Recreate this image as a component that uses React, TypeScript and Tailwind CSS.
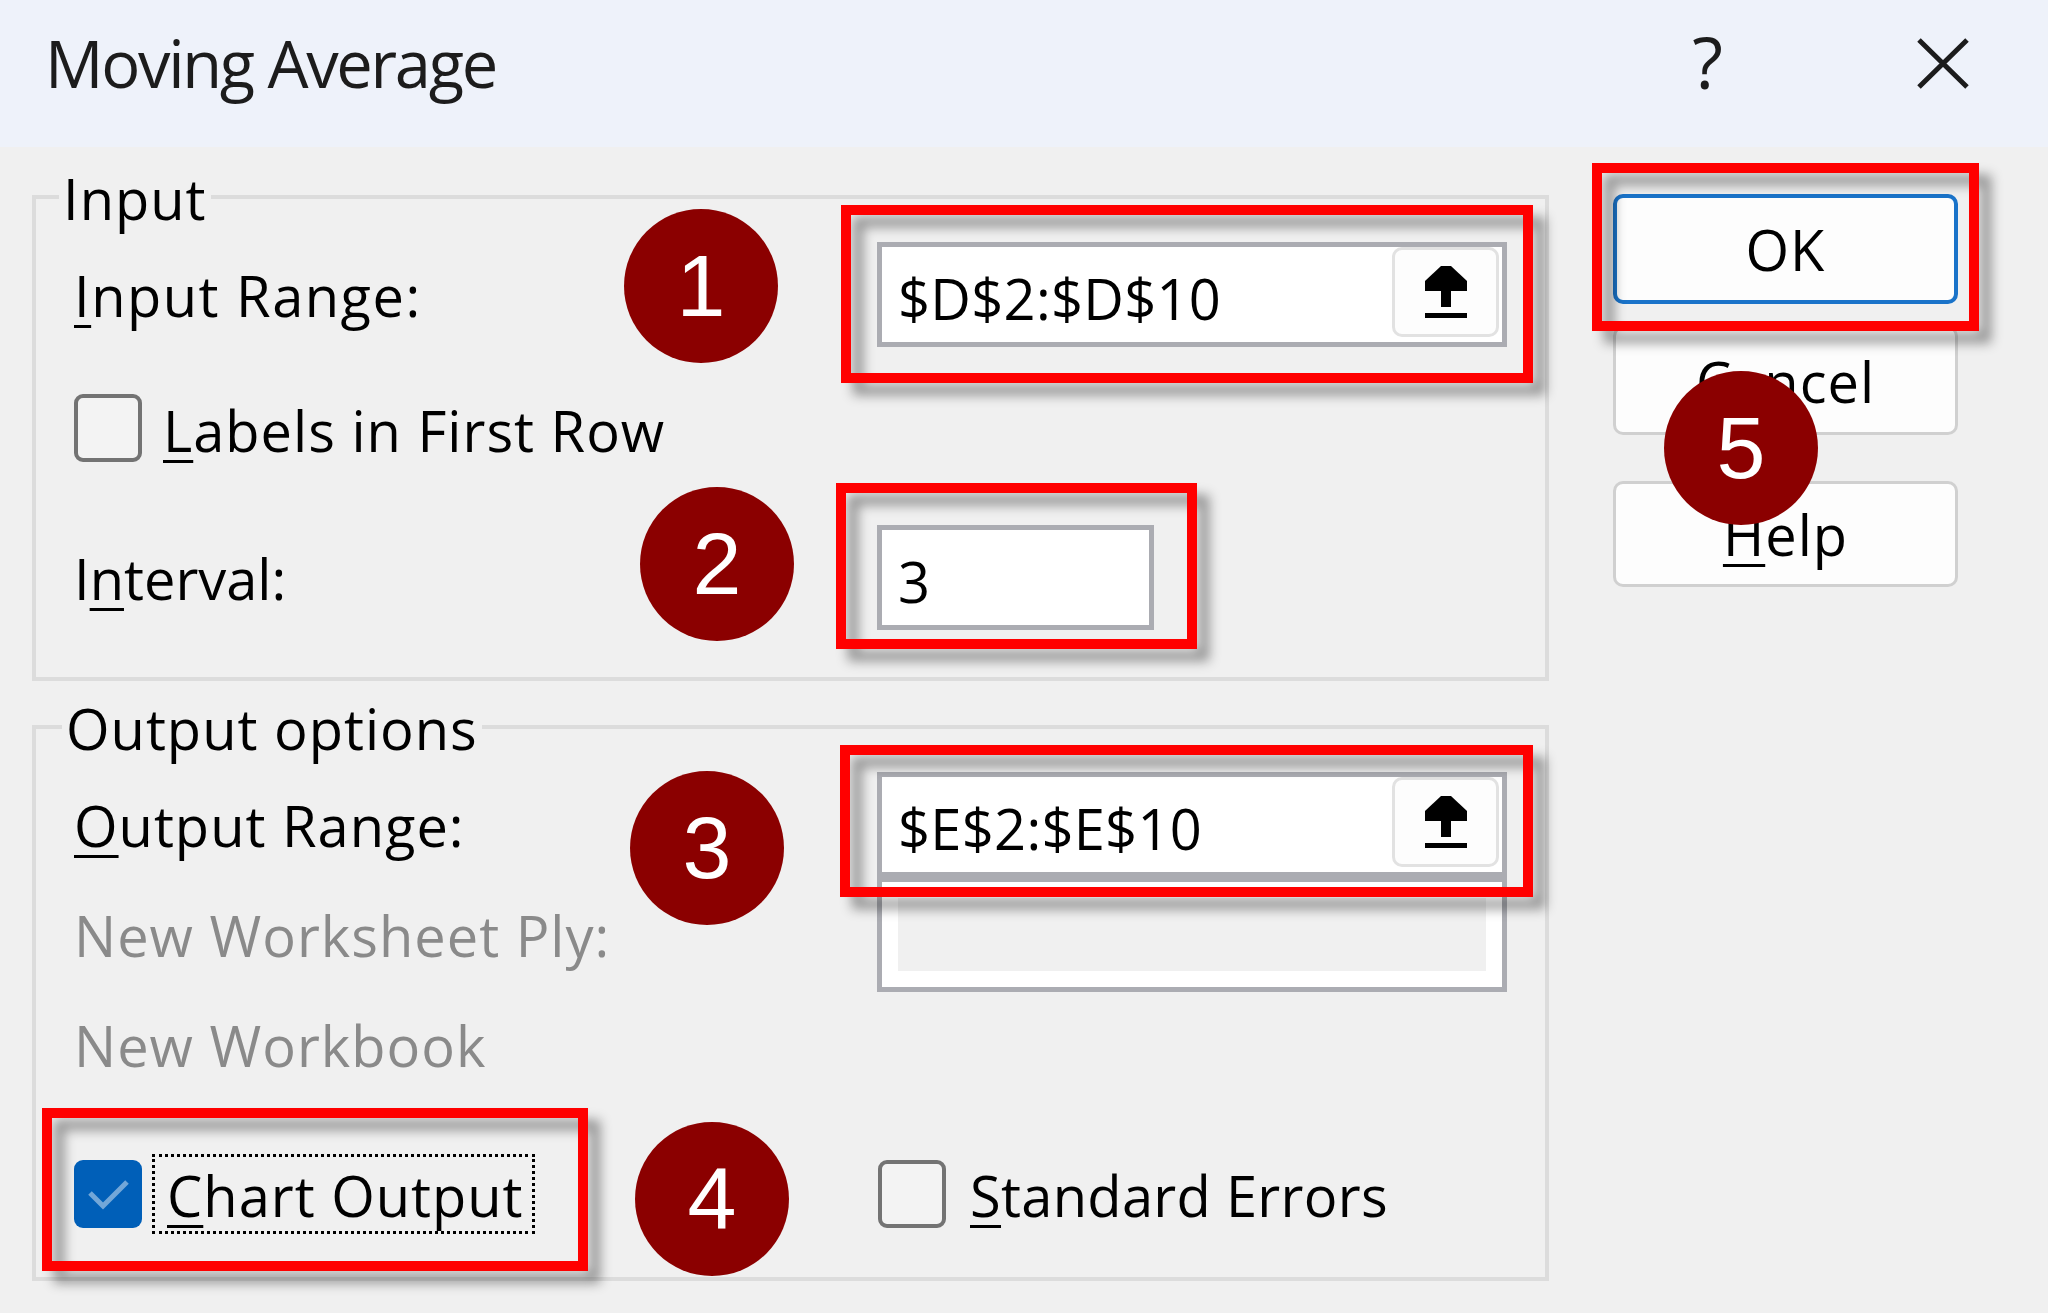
import type { ReactNode } from 'react'

function Accel({ children }: { children: ReactNode }) {
  return <span className="underline decoration-[3px] underline-offset-[8px]">{children}</span>
}

function UpArrow() {
  return (
    <svg width="42" height="52" viewBox="0 0 42 52" fill="#000">
      <path d="M16 0h10l16 15v10H0V15z" />
      <rect x="16" y="25" width="10" height="16" />
      <rect x="0" y="47" width="42" height="5" />
    </svg>
  )
}

function RefEdit({ value }: { value: string }) {
  return (
    <div className="flex h-[105px] w-[630px] items-start border-[5px] border-[#abacb2] bg-white">
      <div className="flex h-full flex-1 items-center pl-[16px] pt-[6px] tracking-[0.3px]">{value}</div>
      <div className="mr-[3px] flex h-[90px] w-[107px] items-center justify-center rounded-[10px] border-[3px] border-[#e2e2e2] bg-[#fdfdfd]">
        <UpArrow />
      </div>
    </div>
  )
}

function CheckBox({ checked }: { checked?: boolean }) {
  if (checked) {
    return (
      <div className="h-[68px] w-[68px] shrink-0 rounded-[9px] bg-[#005fb8]">
        <svg width="68" height="68" viewBox="0 0 68 68">
          <polyline points="16,33 29,46 53,22" fill="none" stroke="rgba(255,255,255,0.45)" strokeWidth="5" />
        </svg>
      </div>
    )
  }
  return <div className="h-[68px] w-[68px] shrink-0 rounded-[9px] border-[4px] border-[#737373] bg-[#f3f3f3]" />
}

function Marker({ className }: { className: string }) {
  return (
    <div
      className={`absolute border-[10px] border-[#ff0000] [filter:drop-shadow(12px_12px_6px_rgba(0,0,0,0.4))] ${className}`}
    />
  )
}

function Badge({ n, className }: { n: number; className: string }) {
  return (
    <div
      className={`absolute flex h-[154px] w-[154px] items-center justify-center rounded-full bg-[#8b0000] font-['Liberation_Sans',Arial,sans-serif] text-[88px] leading-none tracking-normal text-white ${className}`}
    >
      {n}
    </div>
  )
}

export default function App() {
  return (
    <div className="relative h-[1313px] w-[2048px] overflow-hidden bg-[#f0f0f0] font-['Open_Sans',sans-serif] text-[56px] leading-[56px] tracking-[1px] text-black">
      {/* title bar */}
      <div className="flex h-[147px] items-start bg-[#eef2fa] text-[#1c1c1c]">
        <div className="pl-[45px] pt-[31px] text-[65px] leading-[65px] tracking-[-2.3px]">Moving Average</div>
        <div className="flex-1" />
        <div className="flex w-[31px] justify-center pt-[26px] text-[71px] leading-[71px] tracking-normal">?</div>
        <div className="ml-[194px] mr-[79px] pt-[38px]">
          <svg width="52" height="51" viewBox="0 0 52 51">
            <path d="M2 2L50 49M50 2L2 49" stroke="#1c1c1c" strokeWidth="5" />
          </svg>
        </div>
      </div>

      <div className="flex">
        {/* left: group boxes */}
        <div className="ml-[32px] w-[1517px]">
          <div className="relative mt-[48px] h-[486px] border-[4px] border-[#dcdcdc] pl-[38px]">
            <span className="absolute left-[23px] top-[-21px] bg-[#f0f0f0] px-[4px] leading-[40px]">Input</span>
            <div className="mt-[43px] flex h-[105px] items-center">
              <div className="w-[803px] tracking-[1.5px]">
                <Accel>I</Accel>nput Range:
              </div>
              <RefEdit value="$D$2:$D$10" />
            </div>
            <div className="mt-[47px] flex h-[68px] items-center gap-[21px]">
              <CheckBox />
              <div className="pt-[4px]">
                <Accel>L</Accel>abels in First Row
              </div>
            </div>
            <div className="mt-[63px] flex h-[105px] items-center">
              <div className="w-[803px] tracking-[0px]">
                I<Accel>n</Accel>terval:
              </div>
              <div className="flex h-[105px] w-[277px] items-center border-[5px] border-[#abacb2] bg-white pl-[16px] pt-[6px]">3</div>
            </div>
          </div>

          <div className="relative mt-[44px] h-[556px] border-[4px] border-[#dcdcdc] pl-[38px]">
            <span className="absolute left-[26px] top-[-21px] bg-[#f0f0f0] px-[4px] leading-[40px]">Output options</span>
            <div className="mt-[43px] flex h-[105px] items-center">
              <div className="w-[803px]">
                <Accel>O</Accel>utput Range:
              </div>
              <RefEdit value="$E$2:$E$10" />
            </div>
            <div className="flex h-[115px] items-center">
              <div className="w-[803px] text-[#8a8a8a]">New Worksheet Ply:</div>
              <div className="h-[115px] w-[630px] border-[5px] border-[#abacb2] bg-white p-[16px]">
                <div className="h-full bg-[#f0f0f0]" />
              </div>
            </div>
            <div className="mt-[18px] flex h-[70px] items-center text-[#8a8a8a]">New Workbook</div>
            <div className="mt-[80px] flex h-[68px] items-center">
              <div className="flex w-[804px] items-center">
                <CheckBox checked />
                <div className="ml-[10px] flex h-[80px] w-[383px] items-center border-[3px] border-dotted border-black pl-[12px] pt-[2px]">
                  <Accel>C</Accel>hart Output
                </div>
              </div>
              <CheckBox />
              <div className="ml-[24px] pt-[2px] tracking-[0.3px]">
                <Accel>S</Accel>tandard Errors
              </div>
            </div>
          </div>
        </div>

        {/* right: buttons */}
        <div className="ml-[64px] w-[345px]">
          <div className="mt-[47px] flex h-[110px] items-center justify-center rounded-[10px] border-[4px] border-[#1a73c9] bg-[#fdfdfd]">
            OK
          </div>
          <div className="mt-[22px] flex h-[109px] items-center justify-center rounded-[10px] border-[3px] border-[#d0d0d0] bg-[#fdfdfd]">
            Cancel
          </div>
          <div className="mt-[46px] flex h-[106px] items-center justify-center rounded-[10px] border-[3px] border-[#d0d0d0] bg-[#fdfdfd]">
            <span>
              <Accel>H</Accel>elp
            </span>
          </div>
        </div>
      </div>

      {/* annotations */}
      <Marker className="left-[841px] top-[205px] h-[178px] w-[692px]" />
      <Marker className="left-[836px] top-[483px] h-[166px] w-[361px]" />
      <Marker className="left-[840px] top-[745px] h-[152px] w-[693px]" />
      <Marker className="left-[42px] top-[1108px] h-[163px] w-[546px]" />
      <Marker className="left-[1592px] top-[163px] h-[168px] w-[387px]" />

      <Badge n={1} className="left-[624px] top-[209px]" />
      <Badge n={2} className="left-[640px] top-[487px]" />
      <Badge n={3} className="left-[630px] top-[771px]" />
      <Badge n={4} className="left-[635px] top-[1122px]" />
      <Badge n={5} className="left-[1664px] top-[371px]" />
    </div>
  )
}
